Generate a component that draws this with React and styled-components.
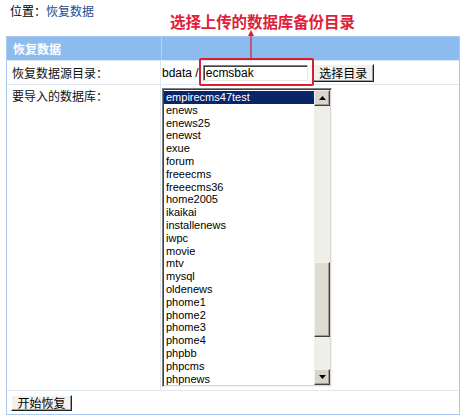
import React from "react";
import styled, { createGlobalStyle } from "styled-components";

const databases = [
  "empirecms47test", "enews", "enews25", "enewst", "exue", "forum",
  "freeecms", "freeecms36", "home2005", "ikaikai", "installenews", "iwpc",
  "movie", "mtv", "mysql", "oldenews", "phome1", "phome2", "phome3",
  "phome4", "phpbb", "phpcms", "phpnews",
];

export default function App() {
  return (
    <Page>
      <GlobalStyle />
      <Top>
        <Location>
          位置：<LocLink>恢复数据</LocLink>
        </Location>
        <Callout>选择上传的数据库备份目录</Callout>
        <Pointer width="10" height="30" viewBox="0 0 10 30">
          <path d="M5 1 L2 7 L8 7 Z" fill="#d81e34" />
          <line x1="5" y1="6" x2="5" y2="30" stroke="#d81e34" strokeWidth="1.2" />
        </Pointer>
      </Top>
      <Table>
        <HeadCell>恢复数据</HeadCell>
        <HeadCell $divider />
        <Label>恢复数据源目录：</Label>
        <Field>
          <Prefix>bdata /</Prefix>
          <Highlight>
            <TextInput defaultValue="ecmsbak" />
          </Highlight>
          <Button>选择目录</Button>
        </Field>
        <Label $top>要导入的数据库：</Label>
        <Field $top>
          <ListBox>
            <Items>
              {databases.map((d, i) => (
                <Item key={d} $selected={i === 0}>{d}</Item>
              ))}
            </Items>
            <ScrollBar>
              <ArrowBtn>
                <svg width="7" height="4" viewBox="0 0 7 4"><path d="M3.5 0 L7 4 L0 4 Z" fill="#000" /></svg>
              </ArrowBtn>
              <Track>
                <TrackGap $h={156} />
                <Thumb />
              </Track>
              <ArrowBtn>
                <svg width="7" height="4" viewBox="0 0 7 4"><path d="M0 0 L7 0 L3.5 4 Z" fill="#000" /></svg>
              </ArrowBtn>
            </ScrollBar>
          </ListBox>
        </Field>
        <Footer>
          <Button $wide>开始恢复</Button>
        </Footer>
      </Table>
    </Page>
  );
}

const GlobalStyle = createGlobalStyle`
  body {
    margin: 0;
    background: #fff;
    font-family: "Liberation Sans", "Noto Sans CJK SC", sans-serif;
    font-size: 12px;
    color: #000;
  }
`;

const Page = styled.div`
  width: 474px;
  height: 419px;
  background: #fff;
`;

const Top = styled.div`
  position: relative;
  height: 36px;
`;

const Location = styled.div`
  padding: 4px 0 0 10px;
  font-size: 12px;
  line-height: 14px;
  font-family: "Noto Sans CJK SC", sans-serif;
`;

const LocLink = styled.span`
  color: #1d4d8f;
`;

const Callout = styled.div`
  position: absolute;
  left: 170px;
  top: 11px;
  font-family: "Noto Sans CJK SC", sans-serif;
  font-size: 15.5px;
  font-weight: bold;
  line-height: 20px;
  color: #e0203a;
  letter-spacing: -0.1px;
`;

const Pointer = styled.svg`
  position: absolute;
  left: 246px;
  top: 29px;
  overflow: visible;
  z-index: 2;
`;

const Table = styled.div`
  margin-left: 6px;
  width: 452px;
  border: 1px solid #a9c9f0;
  display: grid;
  grid-template-columns: 154px 1fr;
`;

const HeadCell = styled.div`
  height: 23px;
  background: #8cbcef;
  color: #fff;
  font-weight: bold;
  font-family: "Noto Sans CJK SC", sans-serif;
  line-height: 23px;
  padding-left: 6px;
  border-left: ${(p) => (p.$divider ? "1px solid #b7d4f5" : "none")};
`;

const Label = styled.div`
  border-top: 1px solid #dfe7f1;
  border-right: 1px solid #dfe7f1;
  box-sizing: border-box;
  height: ${(p) => (p.$top ? "306px" : "24px")};
  padding: ${(p) => (p.$top ? "4px 0 0 5px" : "0 0 0 5px")};
  display: flex;
  align-items: ${(p) => (p.$top ? "flex-start" : "center")};
  font-family: "Noto Sans CJK SC", sans-serif;
  line-height: 14px;
  color: #111;
`;

const Field = styled.div`
  border-top: 1px solid #dfe7f1;
  box-sizing: border-box;
  height: ${(p) => (p.$top ? "306px" : "24px")};
  padding: ${(p) => (p.$top ? "3px 0 0 1px" : "0 0 0 1px")};
  display: flex;
  align-items: ${(p) => (p.$top ? "flex-start" : "center")};
`;

const Prefix = styled.span`
  font-size: 12px;
  margin-right: 2px;
`;

const Highlight = styled.div`
  position: relative;
  padding: 0 2px;
  &::after {
    content: "";
    position: absolute;
    left: -2px;
    right: -4px;
    top: -7px;
    bottom: -5px;
    border: 2px solid #d81e34;
    border-radius: 2px;
    pointer-events: none;
  }
`;

const TextInput = styled.input`
  width: 105px;
  height: 16px;
  box-sizing: border-box;
  margin: 0;
  padding: 0 2px;
  font-family: "Liberation Sans", sans-serif;
  font-size: 12px;
  border: 1px solid;
  border-color: #808080 #e8e8e8 #e8e8e8 #808080;
  box-shadow: inset 1px 1px 0 #404040;
  background: #fff;
  outline: none;
`;

const Button = styled.button`
  margin: 0 0 0 ${(p) => (p.$wide ? "0" : "3px")};
  width: 61px;
  height: ${(p) => (p.$wide ? "16px" : "18px")};
  padding: 0;
  background: #f2f1ed;
  font-family: "Noto Sans CJK SC", sans-serif;
  font-size: 12px;
  line-height: 14px;
  color: #000;
  border: 1px solid;
  border-color: #ffffff #202020 #202020 #ffffff;
  box-shadow: inset -1px -1px 0 #a0a0a0;
`;

const ListBox = styled.div`
  width: 170px;
  height: 299px;
  box-sizing: border-box;
  border: 1px solid;
  border-color: #808080 #f4f4f4 #f4f4f4 #808080;
  box-shadow: inset 1px 1px 0 #404040, inset -1px -1px 0 #d8d6cf;
  padding: 1px;
  display: flex;
  background: #fff;
`;

const Items = styled.div`
  flex: 1;
  overflow: hidden;
  padding-top: 1px;
`;

const Item = styled.div`
  height: 12.8px;
  line-height: 12.8px;
  font-size: 11px;
  padding-left: 2px;
  white-space: nowrap;
  color: ${(p) => (p.$selected ? "#fff" : "#000")};
  background: ${(p) => (p.$selected ? "#0a246a" : "transparent")};
`;

const ScrollBar = styled.div`
  width: 16px;
  display: flex;
  flex-direction: column;
  background: #efeee9;
`;

const ArrowBtn = styled.div`
  height: 16px;
  box-sizing: border-box;
  background: #d8d5cc;
  border: 1px solid;
  border-color: #f2f1ec #404040 #404040 #f2f1ec;
  box-shadow: inset -1px -1px 0 #9c9a92;
  display: flex;
  align-items: center;
  justify-content: center;
`;

const Track = styled.div`
  flex: 1;
  display: flex;
  flex-direction: column;
`;

const TrackGap = styled.div`
  height: ${(p) => p.$h}px;
`;

const Thumb = styled.div`
  height: 75px;
  box-sizing: border-box;
  background: #dedbd3;
  border: 1px solid;
  border-color: #f2f1ec #404040 #404040 #f2f1ec;
  box-shadow: inset -1px -1px 0 #9c9a92;
`;

const Footer = styled.div`
  grid-column: 1 / -1;
  border-top: 1px solid #dfe7f1;
  height: 24px;
  box-sizing: border-box;
  padding-left: 4px;
  display: flex;
  align-items: center;
`;
